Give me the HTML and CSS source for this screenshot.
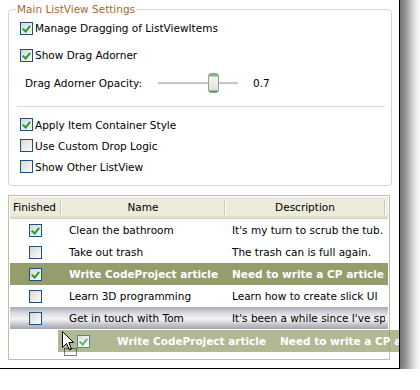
FILE: index.html
```html
<!DOCTYPE html>
<html>
<head>
<meta charset="utf-8">
<link rel="stylesheet" href="styles.css">
</head>
<body>
<div class="window">
  <fieldset class="settings">
    <legend>Main ListView Settings</legend>
    <label class="opt opt-top"><span class="cb checked"></span>Manage Dragging of ListViewItems</label>
    <label class="opt opt-top opt-second"><span class="cb checked"></span>Show Drag Adorner</label>
    <div class="slider-row">
      <span class="slider-label">Drag Adorner Opacity:</span>
      <div class="slider"><div class="track"></div><div class="thumb"></div></div>
      <span class="slider-val">0.7</span>
    </div>
    <div class="sep"></div>
    <label class="opt"><span class="cb checked"></span>Apply Item Container Style</label>
    <label class="opt"><span class="cb"></span>Use Custom Drop Logic</label>
    <label class="opt"><span class="cb"></span>Show Other ListView</label>
  </fieldset>

  <div class="listview">
    <div class="lv-header">
      <div class="hcol c1 left">Finished</div>
      <div class="hcol c2">Name</div>
      <div class="hcol c3">Description</div>
      <div class="hcol filler"></div>
    </div>
    <div class="row">
      <div class="cell c1"><span class="cb checked"></span></div>
      <div class="cell c2">Clean the bathroom</div>
      <div class="cell c3">It's my turn to scrub the tub.</div>
    </div>
    <div class="row">
      <div class="cell c1"><span class="cb"></span></div>
      <div class="cell c2">Take out trash</div>
      <div class="cell c3">The trash can is full again.</div>
    </div>
    <div class="row selected">
      <div class="cell c1"><span class="cb checked"></span></div>
      <div class="cell c2">Write CodeProject article</div>
      <div class="cell c3">Need to write a CP article.</div>
    </div>
    <div class="row">
      <div class="cell c1"><span class="cb"></span></div>
      <div class="cell c2">Learn 3D programming</div>
      <div class="cell c3">Learn how to create slick UI</div>
    </div>
    <div class="row drop-target">
      <div class="cell c1"><span class="cb"></span></div>
      <div class="cell c2">Get in touch with Tom</div>
      <div class="cell c3">It's been a while since I've spoken to him.</div>
    </div>
  </div>

  <div class="row selected adorner">
    <div class="cell c1"><span class="cb checked"></span></div>
    <div class="cell c2">Write CodeProject article</div>
    <div class="cell c3">Need to write a CP article.</div>
  </div>

  <svg class="cursor" width="16" height="26" viewBox="0 0 16 26">
    <path d="M0.5 0.5 L0.5 16.5 L4.5 12.5 L7.5 19 L9.5 18 L6.8 11.5 L11.5 11.5 Z" fill="#fff" stroke="#000" stroke-width="1"/>
    <rect x="2.5" y="17.5" width="12" height="7" fill="none" stroke="#000" stroke-width="1" stroke-dasharray="1 1"/>
  </svg>
</div>
</body>
</html>
```

FILE: styles.css
```css
html, body {
  margin: 0;
  padding: 0;
  background: #ffffff;
}

body {
  font-family: "DejaVu Sans", Verdana, sans-serif;
  font-size: 10.5px;
  color: #000;
}

.window {
  position: relative;
  width: 400px;
  height: 399px;
  margin-top: -30px;
  box-sizing: border-box;
  border-right: 1px solid #000;
  border-bottom: 1px solid #000;
  background: #fff;
  padding: 32px 0 0 8px;
  overflow: hidden;
  box-shadow: 6px 7px 13px 3px rgba(0, 0, 0, 0.6);
}

.settings {
  margin: 0;
  width: 384px;
  box-sizing: border-box;
  border: 1px solid #d3d6cc;
  border-radius: 4px;
  padding: 0 0 8px 11px;
  display: flex;
  flex-direction: column;
  min-inline-size: 0;
}

.settings legend {
  margin-left: -4px;
  padding: 0 1px;
  line-height: 14px;
  color: #a8672b;
}

.opt {
  display: flex;
  align-items: center;
  gap: 2px;
  height: 21px;
}

.opt-top {
  height: 22px;
  margin-top: 1px;
}

.opt-second {
  margin-top: 5px;
}

.cb {
  position: relative;
  flex: none;
  width: 13px;
  height: 13px;
  box-sizing: border-box;
  border: 1px solid #1c5180;
  background: linear-gradient(135deg, #d6d6d0 0%, #ececea 55%, #fbfbfb 100%);
}

.cb.checked::after {
  content: "";
  position: absolute;
  left: 3px;
  top: 1px;
  width: 3px;
  height: 6px;
  border-right: 2px solid #21a121;
  border-bottom: 2px solid #21a121;
  transform: rotate(40deg);
}

.slider-row {
  display: flex;
  align-items: center;
  height: 26px;
  margin-top: 4px;
  padding-left: 5px;
}

.slider-label {
  width: 133px;
}

.slider {
  position: relative;
  width: 80px;
  height: 26px;
}

.track {
  position: absolute;
  left: 0;
  right: 0;
  top: 12px;
  height: 2px;
  background: #c8c8c4;
  border-bottom: 1px solid #f2f2f2;
}

.thumb {
  position: absolute;
  left: 50px;
  top: 3px;
  width: 11px;
  height: 20px;
  box-sizing: border-box;
  border: 1px solid #9c9c94;
  border-radius: 3px;
  background: linear-gradient(to bottom, #6fc06f 0px, #6fc06f 2px, #f4f4f0 3px, #e4e4de 16px, #52a852 17px, #3e9a3e 100%);
}

.slider-val {
  margin-left: 15px;
}

.sep {
  height: 1px;
  background: #d8d8d0;
  margin: 10px 6px 7px -3px;
}

.listview {
  margin-top: 9px;
  width: 382px;
  height: 165px;
  box-sizing: border-box;
  border: 1px solid #bec2a4;
  padding: 1px;
}

.lv-header {
  display: flex;
  height: 22px;
  box-sizing: border-box;
  background: #ebeadb;
  border-bottom: 1px solid #d6d2c2;
  box-shadow: inset 0 -2px 0 #e2ded0;
}

.hcol {
  position: relative;
  line-height: 21px;
  text-align: center;
  box-sizing: border-box;
}

.hcol.left {
  text-align: left;
  padding-left: 3px;
}

.hcol::after {
  content: "";
  position: absolute;
  right: 0;
  top: 3px;
  bottom: 3px;
  width: 1px;
  background: #c7c5b2;
  box-shadow: 1px 0 0 #fff;
}

.hcol.filler::after {
  display: none;
}

.c1 {
  width: 51px;
  flex: none;
}

.c2 {
  width: 164px;
  flex: none;
}

.c3 {
  width: 160px;
  flex: none;
}

.filler {
  flex: 1;
}

.row {
  display: flex;
  height: 22px;
  line-height: 22px;
}

.cell {
  box-sizing: border-box;
  overflow: hidden;
  white-space: nowrap;
}

.cell.c1 {
  display: flex;
  align-items: center;
  justify-content: center;
  padding-right: 1px;
}

.cell.c2 {
  padding-left: 8px;
}

.cell.c3 {
  padding-left: 7px;
  padding-right: 2px;
}

.row.selected {
  background: #949d6b;
  color: #fff;
  font-weight: bold;
}

.row.drop-target {
  background: linear-gradient(to bottom, #a9a9b3 0%, #dcdce0 30%, #f4f4f6 55%, #c4c4cc 80%, #a4a4ae 100%);
}

.adorner {
  position: absolute;
  left: 58px;
  top: 360px;
  width: 390px;
  opacity: 0.72;
}

.cursor {
  position: absolute;
  left: 62px;
  top: 361px;
}
```
